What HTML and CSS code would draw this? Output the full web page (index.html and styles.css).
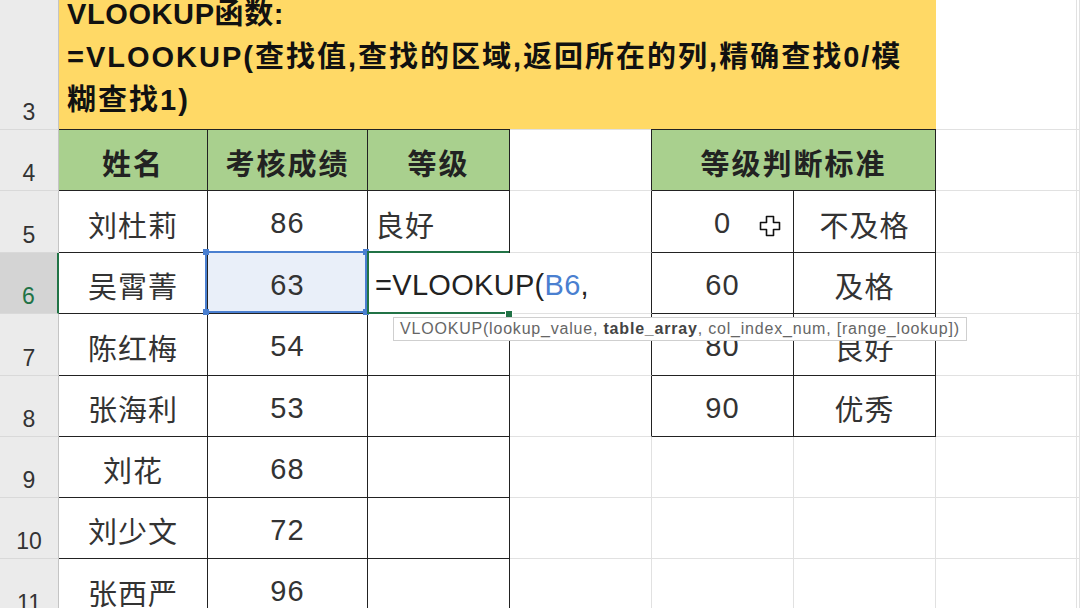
FILE: index.html
```html
<!DOCTYPE html>
<html lang="zh-CN">
<head>
<meta charset="utf-8">
<title>VLOOKUP</title>
<link rel="stylesheet" href="styles.css">
</head>
<body>
<div class="sheet">
  <!-- row 3 -->
  <div class="rh"><span>3</span></div>
  <div class="note">
    <div class="line">VLOOKUP函数:</div>
    <div class="line wide">=VLOOKUP(查找值,查找的区域,返回所在的列,精确查找0/模</div>
    <div class="line wide">糊查找1)</div>
  </div>
  <div class="c"></div>
  <div class="c"></div>

  <!-- row 4 -->
  <div class="rh"><span>4</span></div>
  <div class="c t hd">姓名</div>
  <div class="c t hd">考核成绩</div>
  <div class="c t hd">等级</div>
  <div class="c rb"></div>
  <div class="c t hd span2">等级判断标准</div>
  <div class="c"></div>
  <div class="c"></div>

  <!-- row 5 -->
  <div class="rh"><span>5</span></div>
  <div class="c t">刘杜莉</div>
  <div class="c t">86</div>
  <div class="c t left">良好</div>
  <div class="c rb"></div>
  <div class="c t cur-host">0
    <svg class="cursor" width="22" height="22" viewBox="0 0 22 22"><path d="M7.5 1.5 H14.5 V7.5 H20.5 V14.5 H14.5 V20.5 H7.5 V14.5 H1.5 V7.5 H7.5 Z" fill="#fff" stroke="#111" stroke-width="1.6" stroke-linejoin="round"/></svg>
  </div>
  <div class="c t">不及格</div>
  <div class="c"></div>
  <div class="c"></div>

  <!-- row 6 -->
  <div class="rh rh-act"><span>6</span></div>
  <div class="c t">吴霄菁</div>
  <div class="c t sel">63
    <span class="hdl tl"></span><span class="hdl tr"></span><span class="hdl bl"></span><span class="hdl br"></span>
  </div>
  <div class="c t left edit"><span class="formula">=VLOOKUP(<span class="ref">B6</span>,</span>
    <span class="ghdl"></span>
    <div class="tip">VLOOKUP(lookup_value, <b>table_array</b>, col_index_num, [range_lookup])</div>
  </div>
  <div class="c rb"></div>
  <div class="c t">60</div>
  <div class="c t">及格</div>
  <div class="c"></div>
  <div class="c"></div>

  <!-- row 7 -->
  <div class="rh"><span>7</span></div>
  <div class="c t">陈红梅</div>
  <div class="c t">54</div>
  <div class="c t"></div>
  <div class="c rb"></div>
  <div class="c t">80</div>
  <div class="c t">良好</div>
  <div class="c"></div>
  <div class="c"></div>

  <!-- row 8 -->
  <div class="rh"><span>8</span></div>
  <div class="c t">张海利</div>
  <div class="c t">53</div>
  <div class="c t"></div>
  <div class="c rb"></div>
  <div class="c t">90</div>
  <div class="c t">优秀</div>
  <div class="c"></div>
  <div class="c"></div>

  <!-- row 9 -->
  <div class="rh"><span>9</span></div>
  <div class="c t">刘花</div>
  <div class="c t">68</div>
  <div class="c t"></div>
  <div class="c"></div>
  <div class="c"></div>
  <div class="c"></div>
  <div class="c"></div>
  <div class="c"></div>

  <!-- row 10 -->
  <div class="rh"><span>10</span></div>
  <div class="c t">刘少文</div>
  <div class="c t">72</div>
  <div class="c t"></div>
  <div class="c"></div>
  <div class="c"></div>
  <div class="c"></div>
  <div class="c"></div>
  <div class="c"></div>

  <!-- row 11 -->
  <div class="rh"><span>11</span></div>
  <div class="c t">张西严</div>
  <div class="c t">96</div>
  <div class="c t"></div>
  <div class="c"></div>
  <div class="c"></div>
  <div class="c"></div>
  <div class="c"></div>
  <div class="c"></div>
</div>
</body>
</html>
```

FILE: styles.css
```css
* { box-sizing: border-box; }
html, body {
  margin: 0;
  padding: 0;
  width: 1080px;
  height: 608px;
  overflow: hidden;
  background: #fff;
}
body {
  font-family: "Liberation Sans", "Noto Sans CJK SC", sans-serif;
}
.sheet {
  display: grid;
  grid-template-columns: 59px 149px 160px 142px 142px 142px 142px 141px 1fr;
  grid-template-rows: 150px 61px 62px 61px 62px 61px 61px 61px 62px;
  margin-top: -20px;
}
.rh {
  background: #ebebeb;
  border-right: 1px solid #c4c4c4;
  border-bottom: 1px solid #d9d9d9;
  display: flex;
  align-items: flex-end;
  justify-content: center;
  padding-bottom: 3px;
  font-size: 23px;
  color: #333;
}
.rh-act {
  background: #d4d4d4;
  color: #217346;
  border-right: 2px solid #217346;
}
.c {
  border-right: 1px solid #e1e1e1;
  border-bottom: 1px solid #e1e1e1;
  display: flex;
  align-items: center;
  justify-content: center;
  padding-top: 4px;
  font-size: 29px;
  letter-spacing: 1px;
  color: #333;
  white-space: nowrap;
}
.t {
  border-right-color: #222;
  border-bottom-color: #222;
}
.rb { border-right-color: #222; }
.hd {
  background: #a9d08e;
  font-weight: bold;
  color: #222;
  letter-spacing: 2px;
}
.span2 { grid-column: span 2; }
.left {
  justify-content: flex-start;
  padding-left: 7px;
}
.note {
  grid-column: span 6;
  background:
    linear-gradient(to right, #222 0 451px, #e1e1e1 451px 592px, #222 592px 100%) left bottom / 100% 1px no-repeat,
    #ffd966;
  display: flex;
  flex-direction: column;
  justify-content: flex-end;
  padding: 0 0 8px 8px;
  font-size: 29px;
  font-weight: bold;
  line-height: 43px;
  color: #111;
  white-space: nowrap;
}
.line { letter-spacing: 0.6px; }
.line.wide { letter-spacing: 2px; }

/* selected B6 */
.sel {
  position: relative;
  background: #e9eff9;
}
.sel::before {
  content: "";
  position: absolute;
  left: -3px;
  top: -2px;
  right: 0;
  bottom: 0;
  border: 2px solid #4a7fd0;
  pointer-events: none;
}
.hdl {
  position: absolute;
  width: 6px;
  height: 6px;
  background: #4a7fd0;
}
.hdl.tl { left: -5px; top: -4px; }
.hdl.tr { right: -2px; top: -4px; }
.hdl.bl { left: -5px; bottom: -2px; }
.hdl.br { right: -2px; bottom: -2px; }

/* active editing cell C6 */
.edit {
  position: relative;
  border-right-color: #fff;
  overflow: visible;
  z-index: 2;
}
.edit::before {
  content: "";
  position: absolute;
  left: -1px;
  top: -2px;
  right: 0;
  bottom: -1px;
  border: 2px solid #217346;
  border-right: none;
  pointer-events: none;
}
.formula {
  color: #222;
  letter-spacing: 0.3px;
}
.ref { color: #4a7fd0; }
.ghdl {
  position: absolute;
  right: -3px;
  bottom: -4px;
  width: 6px;
  height: 6px;
  background: #217346;
  outline: 1px solid #fff;
}
.tip {
  position: absolute;
  left: 25px;
  top: 64px;
  background: #fff;
  border: 1px solid #cfcfcf;
  padding: 0 6px;
  font-size: 16px;
  line-height: 22px;
  letter-spacing: 0.8px;
  color: #666;
  white-space: nowrap;
  z-index: 5;
}
.tip b { color: #444; }

/* cursor */
.cur-host { position: relative; }
.cursor {
  position: absolute;
  left: 107px;
  top: 24px;
}
```
